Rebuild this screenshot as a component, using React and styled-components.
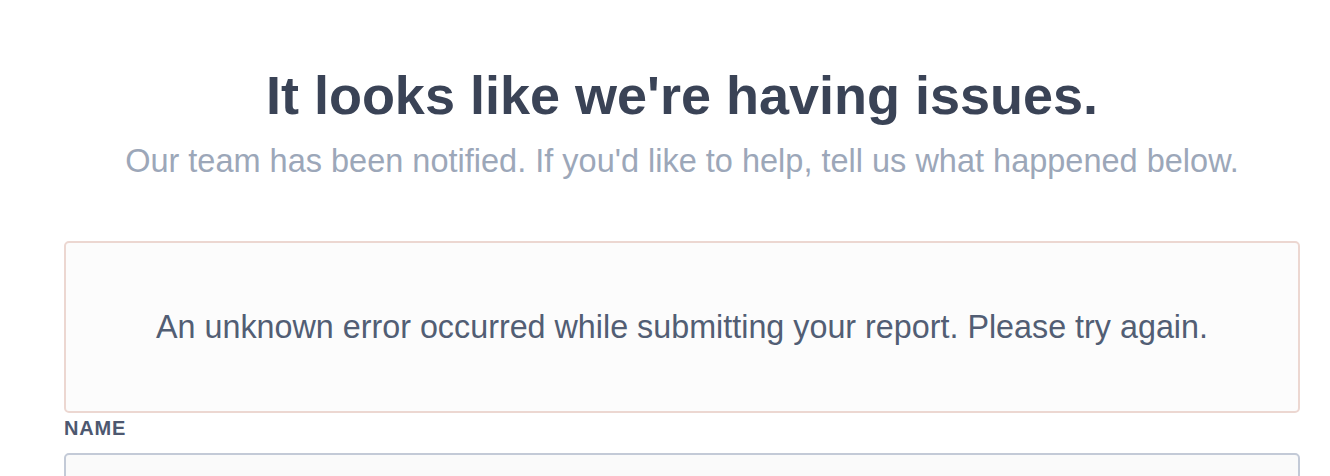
import React from 'react';
import styled, { createGlobalStyle } from 'styled-components';

const GlobalStyle = createGlobalStyle`
  html, body {
    margin: 0;
    padding: 0;
    background: #ffffff;
  }
  body {
    font-family: "Liberation Sans", Arial, Helvetica, sans-serif;
    -webkit-font-smoothing: antialiased;
  }
  * {
    box-sizing: border-box;
  }
`;

const Page = styled.div`
  padding: 63px 30px 0 64px;
  display: flex;
  flex-direction: column;
`;

const Header = styled.header`
  display: flex;
  flex-direction: column;
  align-items: center;
  text-align: center;
  margin-bottom: 60px;
`;

const Title = styled.h1`
  margin: 0;
  font-size: 54px;
  line-height: 64px;
  font-weight: 700;
  color: #3a4356;
`;

const Subtitle = styled.p`
  margin: 14px 0 0;
  font-size: 32.5px;
  line-height: 40px;
  color: #9ca7b9;
`;

const ErrorBox = styled.div`
  height: 172px;
  display: flex;
  align-items: center;
  justify-content: center;
  border: 2px solid #ecd7d1;
  border-radius: 5px;
  background: #fcfcfc;
  color: #525e74;
  font-size: 32.3px;
`;

const Field = styled.div`
  display: flex;
  flex-direction: column;
  gap: 13px;
  margin-top: 3px;
`;

const Label = styled.label`
  font-size: 20px;
  line-height: 24px;
  font-weight: 700;
  letter-spacing: 0.8px;
  color: #4d5870;
`;

const Input = styled.input`
  height: 48px;
  border: 2px solid #c3cad7;
  border-radius: 5px;
  background: #fafafa;
  font: inherit;
  padding: 0 12px;
`;

export default function App() {
  return (
    <>
      <GlobalStyle />
      <Page>
        <Header>
          <Title>It looks like we're having issues.</Title>
          <Subtitle>
            Our team has been notified. If you'd like to help, tell us what happened below.
          </Subtitle>
        </Header>
        <ErrorBox>An unknown error occurred while submitting your report. Please try again.</ErrorBox>
        <Field>
          <Label htmlFor="name">NAME</Label>
          <Input id="name" type="text" />
        </Field>
      </Page>
    </>
  );
}
